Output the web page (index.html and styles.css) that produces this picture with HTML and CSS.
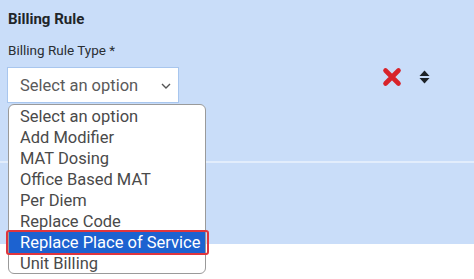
FILE: index.html
```html
<!DOCTYPE html>
<html lang="en">

<head>
    <meta charset="UTF-8">
    <meta name="viewport" content="width=device-width, initial-scale=1.0">
    <title>Billing Rule</title>
    <link rel="stylesheet" href="styles.css">
</head>

<body>
    <div class="panel">
        <div class="top">
            <h4>Billing Rule</h4>
            <div class="row">
                <div class="field">
                    <p class="label">Billing Rule Type *</p>
                    <div class="select">
                        <span>Select an option</span>
                        <svg class="chev" width="10" height="6" viewBox="0 0 10 6">
                            <path d="M1 1 L5 5 L9 1" fill="none" stroke="#555" stroke-width="1.4" />
                        </svg>
                    </div>
                    <ul class="options">
                        <li>Select an option</li>
                        <li>Add Modifier</li>
                        <li>MAT Dosing</li>
                        <li>Office Based MAT</li>
                        <li>Per Diem</li>
                        <li>Replace Code</li>
                        <li class="picked">Replace Place of Service</li>
                        <li>Unit Billing</li>
                    </ul>
                </div>
                <div class="actions">
                    <svg class="remove" width="20" height="20" viewBox="0 0 20 20">
                        <path d="M3.5 3.5 L16.5 16.5 M16.5 3.5 L3.5 16.5" stroke="#d8232a" stroke-width="4.6" stroke-linecap="round" />
                    </svg>
                    <svg class="sort" width="11" height="14" viewBox="0 0 11 14">
                        <path d="M5.5 0.5 L10.5 6 L0.5 6 Z" fill="#1e2328" />
                        <path d="M0.5 8 L10.5 8 L5.5 13.5 Z" fill="#1e2328" />
                    </svg>
                </div>
            </div>
        </div>
    </div>
    <div class="below"></div>
</body>

</html>
```

FILE: styles.css
```css
* {
    margin: 0;
    padding: 0;
    box-sizing: border-box;
}

body {
    font-family: Roboto, "Liberation Sans", sans-serif;
    background-color: #ffffff;
    color: #212529;
    min-height: 279px;
}

.panel {
    background-color: #c9ddf9;
    height: 244px;
}

.below {
    height: 35px;
}

.top {
    height: 163px;
    padding: 9px 0 0 8px;
    border-bottom: 2px solid #e2edfc;
}

h4 {
    font-size: 15px;
    font-weight: 700;
    line-height: 20px;
}

.row {
    display: flex;
    align-items: flex-start;
}

.field {
    position: relative;
    width: 197px;
    z-index: 2;
}

.label {
    font-size: 13.5px;
    line-height: 20px;
    margin-top: 11px;
    color: #2a2e33;
}

.select {
    display: flex;
    align-items: center;
    justify-content: space-between;
    width: 172px;
    height: 36px;
    margin: 7px 0 0 -1px;
    padding: 0 7px 0 12px;
    background-color: #ffffff;
    border: 1px solid #a8c6ee;
    font-size: 16.5px;
    color: #5a5a5a;
}

.chev {
    margin-top: 2px;
}

.options {
    position: absolute;
    left: 0;
    top: 75px;
    width: 198px;
    height: 170px;
    list-style: none;
    background-color: #ffffff;
    border: 1px solid #9a9a9a;
    border-radius: 6px;
    padding-top: 1px;
    font-size: 16.5px;
    color: #4a4a4a;
}

.options li {
    height: 21px;
    line-height: 21px;
    padding-left: 11px;
    white-space: nowrap;
}

.options .picked {
    position: relative;
    background-color: #1c62d0;
    color: #ffffff;
}

.picked::after {
    content: "";
    position: absolute;
    left: -3px;
    right: -4px;
    top: -2px;
    bottom: -2px;
    border: 2px solid #e0353d;
    border-radius: 3px;
}

.actions {
    display: flex;
    align-items: center;
    gap: 17px;
    margin: 38px 0 0 177px;
}
```
